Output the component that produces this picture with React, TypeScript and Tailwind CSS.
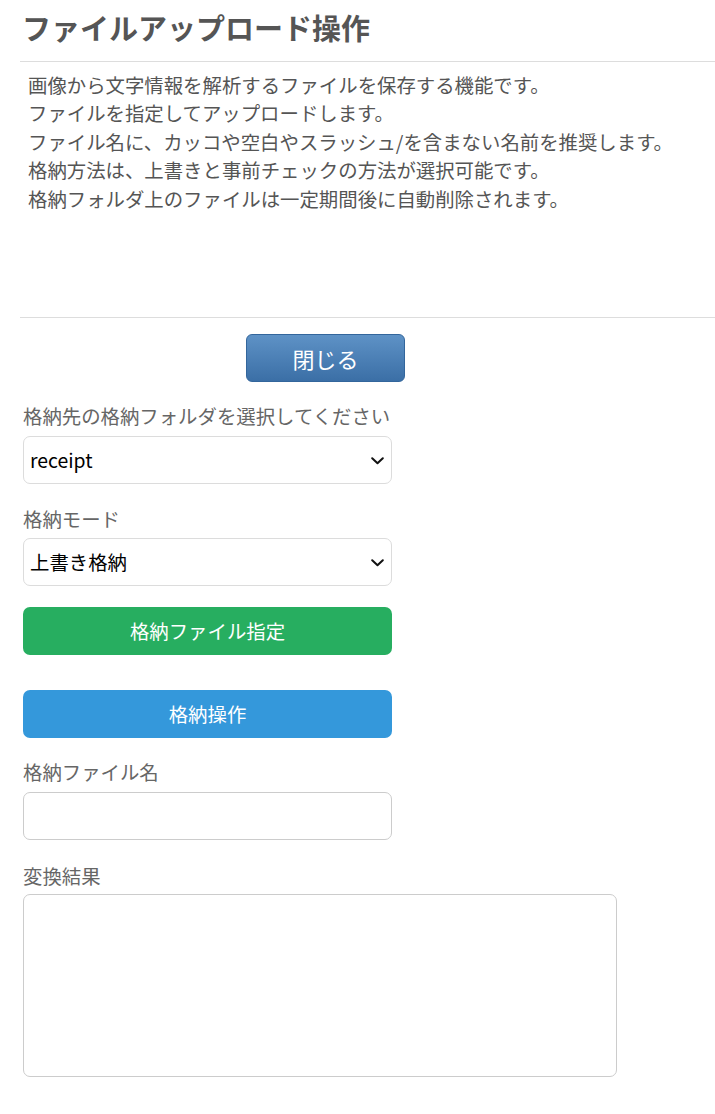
import React from "react";

const font = { fontFamily: '"Noto Sans CJK JP", "Noto Sans", sans-serif' };

function Chevron() {
  return (
    <svg width="13" height="8" viewBox="0 0 13 8" className="absolute right-[7px] top-[20px] pointer-events-none">
      <path d="M1.2 1.2 L6.5 6.3 L11.8 1.2" fill="none" stroke="#111" strokeWidth="2" strokeLinecap="round" strokeLinejoin="round" />
    </svg>
  );
}

function SelectBox({ value }: { value: string }) {
  return (
    <div className="relative w-[369px] h-[48px] rounded-[7px] border border-[#dcdcdc] bg-white flex items-center pl-[6px]">
      <span className="text-[19.4px] text-black leading-none">{value}</span>
      <Chevron />
    </div>
  );
}

export default function App() {
  return (
    <div className="w-[715px] min-h-[1114px] bg-white text-[#666]" style={font}>
      <h1 className="pl-[22px] pt-[7px] h-[61px] text-[29px] font-bold text-[#555] leading-[40px]">
        ファイルアップロード操作
      </h1>
      <div className="ml-[20px] border-t border-[#dddddd]" />
      <div className="h-[255px] pl-[28px] pt-[9px] text-[19.4px] leading-[28.4px] text-[#555]">
        <p>画像から文字情報を解析するファイルを保存する機能です。</p>
        <p>ファイルを指定してアップロードします。</p>
        <p>ファイル名に、カッコや空白やスラッシュ/を含まない名前を推奨します。</p>
        <p>格納方法は、上書きと事前チェックの方法が選択可能です。</p>
        <p>格納フォルダ上のファイルは一定期間後に自動削除されます。</p>
      </div>
      <div className="ml-[20px] border-t border-[#dddddd]" />
      <div className="pl-[23px]">
        <div className="flex pl-[223px] pt-[16px]">
          <button className="w-[159px] h-[48px] rounded-[6px] border border-[#33669c] bg-gradient-to-b from-[#5e92c6] to-[#3b6fa6] text-white text-[22px] leading-none">
            閉じる
          </button>
        </div>
        <div className="mt-[20px] text-[19.4px] leading-[28px]">格納先の格納フォルダを選択してください</div>
        <div className="mt-[6px]">
          <SelectBox value="receipt" />
        </div>
        <div className="mt-[21px] text-[19.4px] leading-[28px]">格納モード</div>
        <div className="mt-[5px]">
          <SelectBox value="上書き格納" />
        </div>
        <button className="mt-[21px] w-[369px] h-[48px] rounded-[7px] bg-[#27ae60] text-white text-[19.4px] leading-none">
          格納ファイル指定
        </button>
        <button className="block mt-[35px] w-[369px] h-[48px] rounded-[7px] bg-[#3498db] text-white text-[19.4px] leading-none">
          格納操作
        </button>
        <div className="mt-[20px] text-[19.4px] leading-[28px]">格納ファイル名</div>
        <div className="mt-[6px] w-[369px] h-[48px] rounded-[7px] border border-[#cccccc] bg-white" />
        <div className="mt-[22px] text-[19.4px] leading-[28px]">変換結果</div>
        <div className="mt-[4px] w-[594px] h-[183px] rounded-[7px] border border-[#cccccc] bg-white" />
      </div>
    </div>
  );
}
